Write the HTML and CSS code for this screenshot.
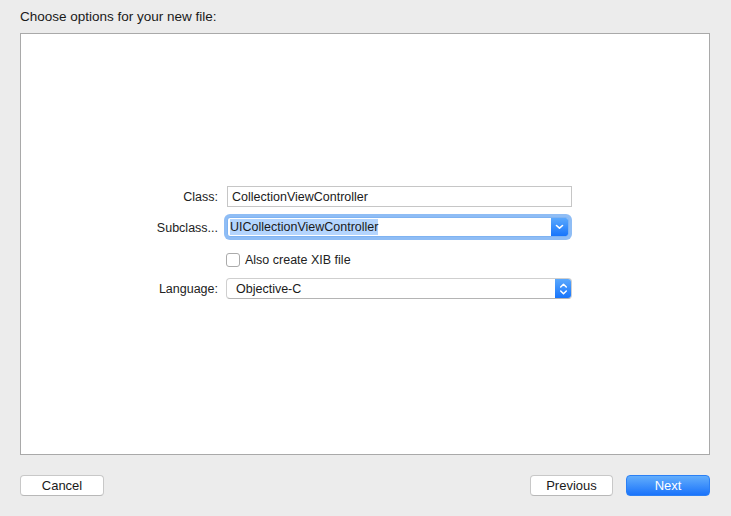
FILE: index.html
```html
<!DOCTYPE html>
<html>
<head>
<meta charset="utf-8">
<link rel="stylesheet" href="styles.css">
</head>
<body>
<div class="dialog">
  <div class="title">Choose options for your new file:</div>
  <div class="panel">
    <div class="form">
      <div class="label row-class">Class:</div>
      <div class="textfield row-class">CollectionViewController</div>

      <div class="label row-sub">Subclass...</div>
      <div class="popup focused row-sub">
        <span class="popup-text"><span class="sel">UICollectionViewController</span></span>
        <span class="arrow">
          <svg width="9" height="6" viewBox="0 0 9 6"><path d="M1.5 1.5 L4.5 4.2 L7.5 1.5" fill="none" stroke="#fff" stroke-width="1.6" stroke-linecap="round" stroke-linejoin="round"/></svg>
        </span>
      </div>

      <div class="label row-check"></div>
      <label class="check row-check"><span class="box"></span><span>Also create XIB file</span></label>

      <div class="label row-lang">Language:</div>
      <div class="popup row-lang">
        <span class="popup-text">Objective-C</span>
        <span class="arrow arrow2">
          <svg width="9" height="14" viewBox="0 0 9 14"><path d="M1.7 5 L4.5 2.3 L7.3 5" fill="none" stroke="#fff" stroke-width="1.5" stroke-linecap="round" stroke-linejoin="round"/><path d="M1.7 9 L4.5 11.7 L7.3 9" fill="none" stroke="#fff" stroke-width="1.5" stroke-linecap="round" stroke-linejoin="round"/></svg>
        </span>
      </div>
    </div>
  </div>
  <div class="footer">
    <button class="btn cancel">Cancel</button>
    <div class="spacer"></div>
    <button class="btn previous">Previous</button>
    <button class="btn primary">Next</button>
  </div>
</div>
</body>
</html>
```

FILE: styles.css
```css
html, body {
  margin: 0;
  padding: 0;
  background: #ececec;
  font-family: "Liberation Sans", Arial, sans-serif;
  font-size: 13px;
  color: #1e1e1e;
}

.dialog {
  width: 731px;
  height: 516px;
  display: flex;
  flex-direction: column;
}

.title {
  height: 33px;
  box-sizing: border-box;
  padding: 9px 20px 0 20px;
  line-height: 16px;
  font-size: 13.5px;
  color: #1a1a1a;
}

.panel {
  margin: 0 21px 0 20px;
  height: 422px;
  box-sizing: border-box;
  border: 1px solid #a9a9a9;
  background: #ffffff;
  padding-top: 152px;
}

.form {
  display: grid;
  grid-template-columns: 197px 346px;
  column-gap: 8px;
  grid-auto-rows: auto;
  row-gap: 0;
}

.label {
  text-align: right;
  font-size: 12.5px;
  color: #222;
  height: 21px;
  line-height: 22px;
}

.row-sub { margin-top: 10px; }
.row-check { margin-top: 16px; }
.row-lang { margin-top: 11px; }
.form .label.row-sub { height: 20px; line-height: 22px; }
.form .label.row-check { height: 14px; }

.textfield {
  margin-left: 1px;
  box-sizing: border-box;
  height: 21px;
  border: 1px solid #c6c6c6;
  padding: 0 4px;
  line-height: 20px;
  font-size: 12.5px;
  background: #fff;
  color: #1a1a1a;
}

.popup {
  box-sizing: border-box;
  height: 21px;
  border: 1px solid #cfcfcf;
  border-bottom-color: #b4b4b4;
  border-radius: 4px;
  background: #fff;
  display: flex;
  align-items: stretch;
  overflow: hidden;
}

.popup.focused {
  height: 20px;
  margin-left: 1px;
  margin-right: 3px;
  border-color: #7fb3f2;
  box-shadow: 0 0 0 3px #8fbdf5;
  border-radius: 3px;
}

.popup-text {
  flex: 1;
  padding-left: 9px;
  line-height: 20px;
  font-size: 12.5px;
  color: #1a1a1a;
}

.popup.focused .popup-text {
  padding-left: 2px;
  line-height: 19px;
}

.sel {
  background: #b4d5fe;
  padding: 1px 0;
}

.arrow {
  width: 17px;
  background: linear-gradient(#5aa8fd, #1875fb);
  display: flex;
  align-items: center;
  justify-content: center;
}

.arrow2 {
  width: 16px;
}

.check {
  display: flex;
  align-items: center;
  gap: 5px;
  height: 14px;
  font-size: 12.5px;
  color: #222;
  line-height: 14px;
}

.check .box {
  width: 14px;
  height: 14px;
  box-sizing: border-box;
  border: 1px solid #ababab;
  border-radius: 3px;
  background: #fff;
}

.footer {
  display: flex;
  padding: 20px 21px 0 20px;
  gap: 13px;
}

.spacer {
  flex: 1;
}

.btn {
  font-family: "Liberation Sans", Arial, sans-serif;
  font-size: 13px;
  height: 21px;
  box-sizing: border-box;
  border: 1px solid #c8c8c8;
  border-bottom-color: #b8b8b8;
  border-radius: 4px;
  background: #fff;
  color: #1a1a1a;
  padding: 0;
  line-height: 19px;
}

.cancel { width: 84px; }
.previous { width: 83px; }

.primary {
  width: 84px;
  border: 1px solid #2b80f5;
  background: linear-gradient(#63aefc, #1a73fb);
  color: #fff;
}
```
